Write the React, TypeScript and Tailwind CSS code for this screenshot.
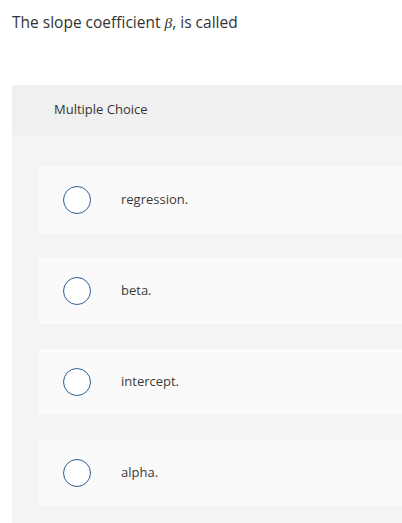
import React from 'react';

const options = ['regression.', 'beta.', 'intercept.', 'alpha.'];

const App: React.FC = () => {
  return (
    <div className="min-h-[523px] bg-white overflow-hidden font-['Open_Sans',sans-serif] text-[#333333]">
      <p className="pl-[12px] pt-[12px] text-[15.5px] leading-[20px]">
        The slope coefficient <i className="font-['Liberation_Serif',serif]">β</i>, is called
      </p>

      <div className="ml-[12px] mt-[52px] rounded-tl-[4px] bg-[#f4f4f4]">
        <div className="flex h-[50px] items-center rounded-tl-[4px] bg-[#f0f0f0] pl-[42px] text-[13px]">
          Multiple Choice
        </div>

        <div className="flex flex-col gap-[25px] pl-[26px] pt-[32px] pb-[30px]">
          {options.map((opt) => (
            <div
              key={opt}
              className="flex h-[66px] items-center rounded-l-[4px] bg-[#fafafa] pl-[25px]"
            >
              <span className="h-[28px] w-[28px] shrink-0 rounded-full border-[1.5px] border-[#2f5f8f] bg-white" />
              <span className="ml-[30px] text-[13px] text-[#3a3a3a]">{opt}</span>
            </div>
          ))}
        </div>
      </div>
    </div>
  );
};

export default App;
